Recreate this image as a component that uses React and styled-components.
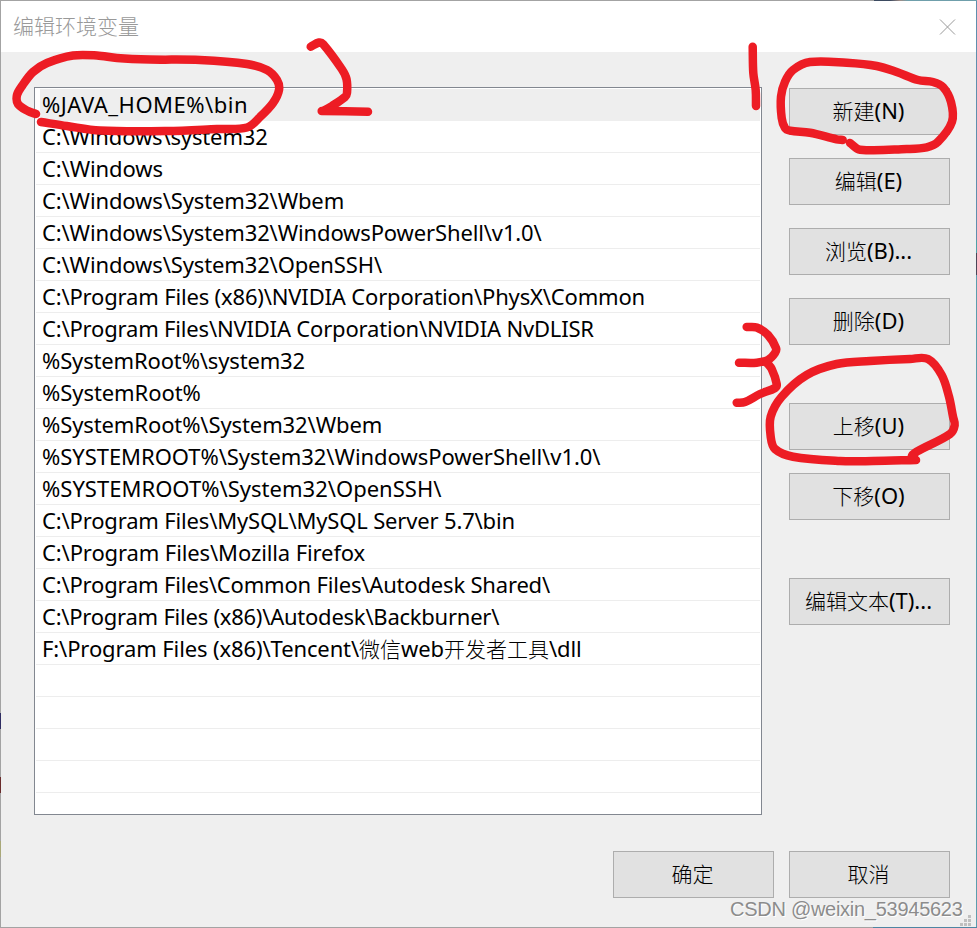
import React, { useState } from "react";
import styled, { createGlobalStyle } from "styled-components";

const GlobalStyle = createGlobalStyle`
	* {
		box-sizing: border-box;
	}

	body {
		margin: 0;
		overflow: hidden;
		font-family: "Noto Sans", "Noto Sans CJK SC", sans-serif;
		font-size: 22px;
		color: #000;
	}
`;

const Dialog = styled.div`
	position: relative;
	width: 977px;
	height: 928px;
	padding: 1px;
	background:
		linear-gradient(90deg, #a3a3a3 874px, #3b4a60 874px 890px, #a08c86 900px, #6f9fab 908px) 0 0 / 100% 1px no-repeat,
		linear-gradient(90deg, #a3a3a3 873px, #4f86a3 873px) 0 100% / 100% 1px no-repeat,
		linear-gradient(#5f8fae 240px, #4fa0a8 240px 253px, #4a4658 253px 275px, #5b9dae 275px) 100% 0 / 1px 100% no-repeat,
		linear-gradient(#a3a3a3 713px, #2f2d62 713px 729px, #a3a3a3 729px 777px, #6a2c2c 777px 793px, #a3a3a3 793px 841px, #a9a878 841px 857px, #a3a3a3 857px) 0 0 / 1px 100% no-repeat;
`;

const Frame = styled.div`
	display: flex;
	flex-direction: column;
	height: 926px;
	background: #efefef;
`;

const TitleBar = styled.header`
	display: flex;
	justify-content: space-between;
	align-items: center;
	height: 51px;
	padding: 0 19px 0 12px;
	background: #fff;
	color: #999;
`;

const Title = styled.h1`
	margin: 0;
	font-size: 21px;
	font-weight: 300;
	line-height: 49px;
	height: 51px;
	font-family: "Noto Sans CJK SC", sans-serif;
`;

const CloseButton = styled.button`
	display: flex;
	padding: 0;
	border: 0;
	background: none;
`;

const Content = styled.div`
	display: flex;
	gap: 27px;
	padding: 35px 26px 0 33px;
`;

const List = styled.ul`
	width: 728px;
	height: 728px;
	margin: 0;
	padding: 1px;
	list-style: none;
	overflow: hidden;
	background: #fff;
	border: 1px solid #828790;
`;

const Row = styled.li`
	height: 32px;
	padding-left: ${(p) => (p.$selected ? 2 : 6)}px;
	margin-left: ${(p) => (p.$selected ? 4 : 0)}px;
	line-height: 30px;
	white-space: pre;
	letter-spacing: ${(p) => p.$spacing || 0}px;
	background: ${(p) => (p.$selected ? "#eee" : "#fff")};
	box-shadow: ${(p) => (p.$selected ? "none" : "inset 0 -1px #ededed")};
`;

const Cjk = styled.span`
	font-family: "Noto Sans CJK SC", sans-serif;
	font-size: 21px;
	font-weight: 300;
	line-height: 1;
	letter-spacing: 0;
`;

const Actions = styled.div`
	display: flex;
	flex-direction: column;
	padding-top: 1px;
`;

const Button = styled.button`
	width: 161px;
	height: 47px;
	margin: 0 0 ${(p) => p.$gap || 0}px;
	padding: 0 2px 3px 0;
	border: 1px solid #adadad;
	background: #e1e1e1;
	color: #000;
	font: inherit;
	line-height: 42px;
	text-align: center;
	white-space: nowrap;
`;

const Footer = styled.footer`
	display: flex;
	justify-content: flex-end;
	gap: 15px;
	padding: 36px 26px 0 0;
`;

const Grip = styled.svg`
	position: absolute;
	right: 6px;
	bottom: 2px;
`;

const Watermark = styled.div`
	position: absolute;
	left: 730px;
	top: 896px;
	font-family: "Liberation Sans", sans-serif;
	font-size: 20px;
	line-height: 26px;
	letter-spacing: -0.27px;
	white-space: nowrap;
	color: #8c8c8c;
	text-shadow: 1px 1px 0 #fff;
`;

const Ink = styled.svg`
	position: absolute;
	left: 0;
	top: 0;
	pointer-events: none;
`;

const entries = [
	{ path: "%JAVA_HOME%\\bin", spacing: 0.5 },
	{ path: "C:\\Windows\\system32", spacing: -0.15 },
	{ path: "C:\\Windows", spacing: -0.1 },
	{ path: "C:\\Windows\\System32\\Wbem", spacing: -0.13 },
	{ path: "C:\\Windows\\System32\\WindowsPowerShell\\v1.0\\", spacing: -0.13 },
	{ path: "C:\\Windows\\System32\\OpenSSH\\", spacing: -0.13 },
	{ path: "C:\\Program Files (x86)\\NVIDIA Corporation\\PhysX\\Common", spacing: -0.17 },
	{ path: "C:\\Program Files\\NVIDIA Corporation\\NVIDIA NvDLISR", spacing: -0.18 },
	{ path: "%SystemRoot%\\system32", spacing: -0.15 },
	{ path: "%SystemRoot%", spacing: -0.06 },
	{ path: "%SystemRoot%\\System32\\Wbem", spacing: -0.1 },
	{ path: "%SYSTEMROOT%\\System32\\WindowsPowerShell\\v1.0\\", spacing: -0.045 },
	{ path: "%SYSTEMROOT%\\System32\\OpenSSH\\", spacing: 0.02 },
	{ path: "C:\\Program Files\\MySQL\\MySQL Server 5.7\\bin", spacing: -0.16 },
	{ path: "C:\\Program Files\\Mozilla Firefox", spacing: -0.11 },
	{ path: "C:\\Program Files\\Common Files\\Autodesk Shared\\", spacing: -0.185 },
	{ path: "C:\\Program Files (x86)\\Autodesk\\Backburner\\", spacing: -0.24 },
	{ path: "F:\\Program Files (x86)\\Tencent\\微信web开发者工具\\dll", spacing: -0.115 },
	{ path: "" },
	{ path: "" },
	{ path: "" },
	{ path: "" },
];

const actions = [
	{ label: "新建(N)", gap: 23 },
	{ label: "编辑(E)", gap: 23 },
	{ label: "浏览(B)...", gap: 23 },
	{ label: "删除(D)", gap: 58 },
	{ label: "上移(U)", gap: 23 },
	{ label: "下移(O)", gap: 58 },
	{ label: "编辑文本(T)...", gap: 0 },
];

// hand drawn marks, one list of x,y pairs per stroke
const strokes = [
	[36, 114, 28, 111, 18, 104, 17, 95, 22, 86, 33, 72, 47, 63, 73, 55.5, 97, 55.5, 117, 58, 150, 59.5, 200, 60, 247, 64, 267, 70, 277, 80, 279, 90, 273, 103, 260, 117, 247, 127.5, 217, 129, 167, 131, 100, 130.5, 67, 126, 41, 122],
	[310.7, 46.7, 319, 42.5, 323, 44, 341.7, 69, 346.5, 79, 347, 93, 345, 97, 332, 106, 325, 110],
	[321.7, 111, 368, 111.7],
	[752.7, 46.7, 753.3, 73, 755.7, 90, 756, 106],
	[842.7, 140, 836.7, 139.3, 810, 132.8, 790, 130.7, 785, 128, 781.7, 118, 781, 96.7, 785, 81.7, 793, 70, 810, 62, 846.7, 62.8, 876.7, 66, 896.7, 72, 918, 80, 933, 82, 943, 87, 951, 102, 952, 121.7, 938, 141.7, 926.7, 147.3, 906.7, 149, 860, 149.7, 850, 143],
	[746.7, 327, 756.7, 327.5, 768, 335, 776, 348, 775, 353, 768, 360, 756.7, 362.7, 739, 362.7],
	[766.7, 362.7, 771.7, 369, 776.7, 384, 775, 388, 760, 394, 745, 402, 736.7, 402.7],
	[916, 460, 873, 461, 840, 461, 793, 456.7, 775, 449, 770.7, 436.7, 770.7, 416.7, 781.7, 396.7, 806.7, 375, 836.7, 364, 870, 361, 910, 359, 928, 359, 941.7, 375, 949, 396.7, 953, 416.7, 954.7, 425, 950, 434, 916.7, 451.7, 911.7, 456.7, 916, 460],
];

// smooth curve that passes through every point of the stroke
const toPath = (pts) => {
	const n = pts.length / 2;
	const at = (i) => {
		const k = Math.min(Math.max(i, 0), n - 1);
		return [pts[k * 2], pts[k * 2 + 1]];
	};
	let d = `M${at(0)}`;
	for (let i = 0; i < n - 1; i++) {
		const [a, b, c, e] = [at(i - 1), at(i), at(i + 1), at(i + 2)];
		// handles stay short next to a long segment
		const len = Math.hypot(c[0] - b[0], c[1] - b[1]);
		const k1 = len / (3 * (Math.hypot(c[0] - a[0], c[1] - a[1]) || 1));
		const k2 = len / (3 * (Math.hypot(e[0] - b[0], e[1] - b[1]) || 1));
		d += `C${b[0] + (c[0] - a[0]) * k1} ${b[1] + (c[1] - a[1]) * k1}`;
		d += ` ${c[0] - (e[0] - b[0]) * k2} ${c[1] - (e[1] - b[1]) * k2} ${c}`;
	}
	return d;
};

// Chinese runs are set one pixel smaller than the latin text
const Label = ({ text }) =>
	text
		.split(/([\u4e00-\u9fff]+)/)
		.map((part, i) => (i % 2 ? <Cjk key={i}>{part}</Cjk> : part));

const App = () => {
	const [selected, setSelected] = useState(0);

	return (
		<>
			<GlobalStyle />
			<Dialog>
				<Frame>
					<TitleBar>
						<Title>编辑环境变量</Title>
						<CloseButton aria-label="关闭">
							<svg width="20" height="16" viewBox="0 0 20 16" fill="none" stroke="#999">
								<path d="M3 .5l15 15M18 .5l-15 15" />
							</svg>
						</CloseButton>
					</TitleBar>

					<Content>
						<List>
							{entries.map((e, i) => (
								<Row
									key={i}
									$selected={i === selected}
									$spacing={e.spacing}
									onClick={() => e.path && setSelected(i)}
								>
									<Label text={e.path} />
								</Row>
							))}
						</List>

						<Actions>
							{actions.map((a) => (
								<Button key={a.label} $gap={a.gap}>
									<Label text={a.label} />
								</Button>
							))}
						</Actions>
					</Content>

					<Footer>
						<Button>
							<Label text="确定" />
						</Button>
						<Button>
							<Label text="取消" />
						</Button>
					</Footer>
				</Frame>

				<Grip width="11" height="11" fill="#bfbfbf">
					<path d="M8 0h3v3h-3zM4 4h3v3h-3zM8 4h3v3h-3zM0 8h3v3h-3zM4 8h3v3h-3zM8 8h3v3h-3z" />
				</Grip>
				<Watermark>CSDN @weixin_53945623</Watermark>

				<Ink
					width="977"
					height="928"
					fill="none"
					stroke="#ed1c24"
					strokeWidth="8.5"
					strokeLinecap="round"
					strokeLinejoin="round"
				>
					{strokes.map((s, i) => (
						<path key={i} d={toPath(s)} />
					))}
				</Ink>
			</Dialog>
		</>
	);
};

export default App;
